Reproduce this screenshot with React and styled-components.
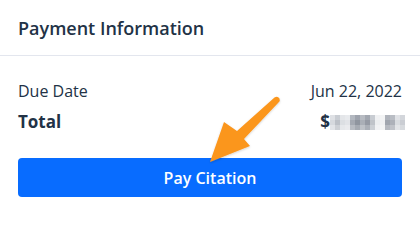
import React from "react";
import styled, { createGlobalStyle } from "styled-components";

const Global = createGlobalStyle`
  html, body { margin: 0; padding: 0; background: #ffffff; }
  body { font-family: "Open Sans", "Noto Sans", sans-serif; -webkit-font-smoothing: antialiased; }
`;

const Card = styled.div`
  position: relative;
  width: 420px;
  height: 231px;
  background: #fff;
  overflow: hidden;
`;

const Header = styled.div`
  padding: 16px 18px 15px;
  border-bottom: 1px solid #e3e6ee;
`;

const Title = styled.h2`
  margin: 0;
  font-size: 18px;
  line-height: 24px;
  font-weight: 600;
  color: #223246;
`;

const Body = styled.div`
  padding: 25px 18px 0;
  display: flex;
  flex-direction: column;
`;

const Row = styled.div`
  display: flex;
  justify-content: space-between;
  align-items: center;
  margin-bottom: ${(p) => p.$mb || 0}px;
`;

const Label = styled.span`
  font-size: ${(p) => (p.$strong ? 17 : 16)}px;
  line-height: ${(p) => (p.$strong ? 24 : 20)}px;
  font-weight: ${(p) => (p.$strong ? 700 : 400)};
  color: #223246;
`;

const Amount = styled.span`
  display: flex;
  align-items: center;
  font-size: 17px;
  line-height: 24px;
  font-weight: 700;
  color: #223246;
  margin-right: -3px;
`;

const Blur = styled.span`
  display: flex;
  height: 15px;
  margin-left: 0;
  filter: blur(0.4px);
`;

const Cell = styled.span`
  width: 5px;
  height: 100%;
  display: flex;
  flex-direction: column;
`;

const Px = styled.span`
  flex: 1;
  background: ${(p) => p.$c};
`;

const Button = styled.button`
  margin-top: 24px;
  width: 100%;
  height: 39px;
  border: none;
  border-radius: 4px;
  background: #086cff;
  color: #fff;
  font-family: "Open Sans", "Noto Sans", sans-serif;
  font-size: 16px;
  font-weight: 600;
  cursor: pointer;
`;

const Arrow = styled.svg`
  position: absolute;
  left: 0;
  top: 0;
  pointer-events: none;
`;

const cols = [
  ["#dfe1e5", "#d6d9de", "#e2e4e8"],
  ["#c9cdd3", "#bcc0c7", "#cdd0d5"],
  ["#e4e6e9", "#dcdfe3", "#e6e8eb"],
  ["#e8eaed", "#e2e4e8", "#eaebee"],
  ["#b3b8c0", "#a4a9b2", "#b8bcc3"],
  ["#9ea3ad", "#8f959f", "#a6abb3"],
  ["#b7bbc2", "#aaafb7", "#bec2c8"],
  ["#a2a7b0", "#959aa4", "#abb0b8"],
  ["#c8ccd2", "#bfc3c9", "#ccd0d5"],
  ["#f0f1f3", "#eceef0", "#f1f2f4"],
  ["#f3f4f5", "#f0f1f3", "#f4f5f6"],
  ["#b0b4bc", "#a1a6af", "#b6bac1"],
  ["#b9bdc4", "#adb1b9", "#c0c3c9"],
  ["#e0e2e6", "#d9dce0", "#e3e5e8"],
  ["#d3d6db", "#cacdd3", "#d7dade"],
];

export default function App() {
  return (
    <Card>
      <Global />
      <Header>
        <Title>Payment Information</Title>
      </Header>
      <Body>
        <Row $mb={9}>
          <Label>Due Date</Label>
          <Label>Jun 22, 2022</Label>
        </Row>
        <Row>
          <Label $strong>Total</Label>
          <Amount>
            $
            <Blur>
              {cols.map((c, i) => (
                <Cell key={i}>
                  {c.map((x, j) => (
                    <Px key={j} $c={x} />
                  ))}
                </Cell>
              ))}
            </Blur>
          </Amount>
        </Row>
        <Button>Pay Citation</Button>
      </Body>
      <Arrow width="420" height="231" viewBox="0 0 420 231">
        <defs>
          <filter id="sh" x="-20%" y="-20%" width="140%" height="140%">
            <feDropShadow dx="0" dy="1" stdDeviation="1" floodColor="#000" floodOpacity="0.18" />
          </filter>
        </defs>
        <path
          d="M210 162 L224 122 L237 131 L274.5 97.5 Q277.5 95.5 279.5 98.5 Q280.5 100.5 278.5 102.5 L244 139 L250 146 Z"
          fill="#fb961f"
          filter="url(#sh)"
          strokeLinejoin="round"
        />
      </Arrow>
    </Card>
  );
}
